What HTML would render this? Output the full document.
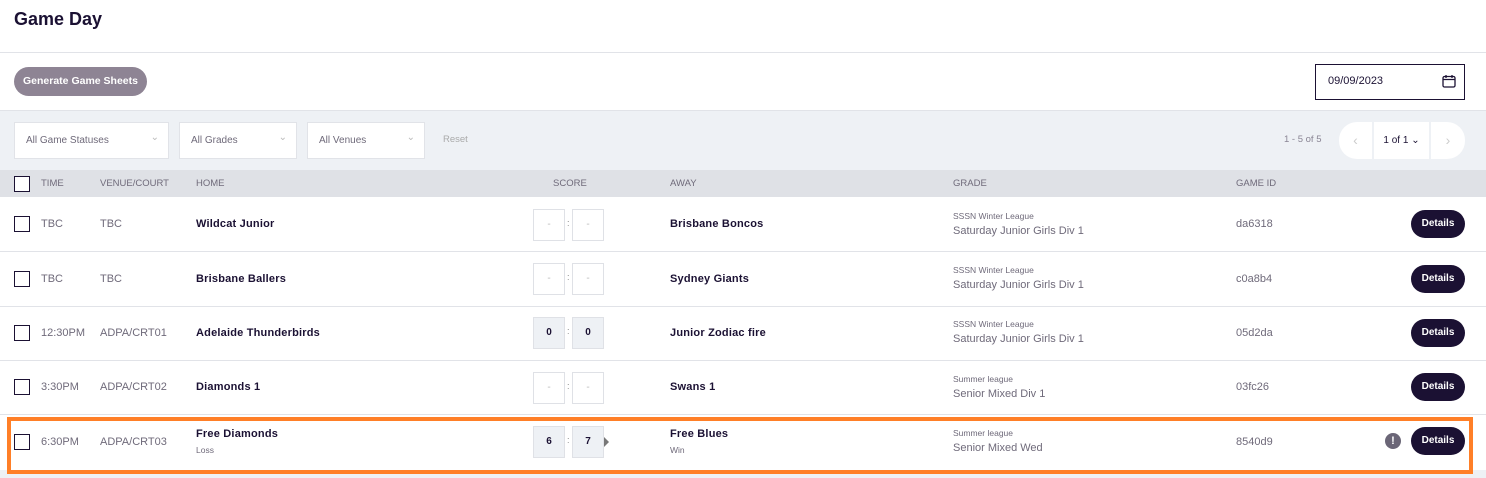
<!DOCTYPE html>
<html><head><style>
*{box-sizing:border-box;margin:0;padding:0}
body{width:1486px;height:478px;overflow:hidden;background:#fff;font-family:"Liberation Sans",sans-serif;color:#1b1133;position:relative}
.a{position:absolute}
.title{left:14px;top:9px;font-size:18px;font-weight:bold;color:#1b1133}
.hr{left:0;width:1486px;height:1px;background:#e1e3e8}
.gen{left:14px;top:67px;width:133px;height:29px;border-radius:15px;background:#8e8494;color:#fff;font-size:10.5px;font-weight:bold;line-height:29px;text-align:center}
.date{left:1315px;top:64px;width:150px;height:36px;border:1.5px solid #1b1133;font-size:11px;line-height:33px;padding-left:12px}
.filt{top:111px;left:0;width:1486px;height:59px;background:#eef1f5}
.sel{top:122px;height:37px;background:#fff;border:1px solid #e1e3e8;font-size:10px;color:#6f6a7a;line-height:35px;padding-left:11px}
.sel:after{content:"⌄";position:absolute;right:9px;top:-3px;color:#bbb;font-size:10px}
.th{top:170px;left:0;width:1486px;height:27px;background:#dfe1e6}
.hd{font-size:9.5px;color:#6f6a7a;top:178px}
.cb{width:16px;height:16px;border:1.5px solid #1b1133;background:#fff}
.t{font-size:11px;color:#6f6a7a}
.b{font-size:11px;font-weight:bold;color:#1b1133;letter-spacing:.2px}
.sm{font-size:8.5px;color:#6f6a7a}
.g{font-size:11px;color:#6f6a7a}
.sc{width:32px;height:32px;border:1px solid #dfe1e6;font-size:10px;text-align:center;line-height:30px;color:#bbb}
.sc.f{background:#eef1f5;color:#1b1133;font-weight:bold}
.det{left:1411px;width:54px;height:28px;border-radius:14px;background:#1b1133;color:#fff;font-size:10px;font-weight:bold;line-height:28px;text-align:center}
</style></head><body>
<div class="a title">Game Day</div>
<div class="a hr" style="top:52px"></div>
<div class="a gen">Generate Game Sheets</div>
<div class="a date">09/09/2023
<svg class="a" style="right:8px;top:9px" width="14" height="14" viewBox="0 0 14 14" fill="none" stroke="#1b1133" stroke-width="1.3"><rect x="1" y="2.5" width="12" height="10.5" rx="1.5"/><path d="M1 5.5h12M4 1v3M10 1v3"/></svg></div>
<div class="a hr" style="top:110px"></div>
<div class="a filt"></div>
<div class="a sel" style="left:14px;width:155px">All Game Statuses</div>
<div class="a sel" style="left:179px;width:118px">All Grades</div>
<div class="a sel" style="left:307px;width:118px">All Venues</div>
<div class="a" style="left:443px;top:134px;font-size:9.5px;color:#aaa">Reset</div>
<div class="a" style="left:1284px;top:134px;font-size:9.5px;color:#8a8594">1 - 5 of 5</div>
<div class="a" style="left:1339px;top:122px;width:33px;height:37px;background:#fff;border-radius:18px 0 0 18px;color:#ccc;text-align:center;line-height:37px;font-size:14px">‹</div>
<div class="a" style="left:1374px;top:122px;width:55px;height:37px;background:#fff;font-size:10px;text-align:center;line-height:37px;color:#1b1133">1 of 1 ⌄</div>
<div class="a" style="left:1431px;top:122px;width:34px;height:37px;background:#fff;border-radius:0 18px 18px 0;color:#ccc;text-align:center;line-height:37px;font-size:14px">›</div>
<div class="a th"></div>
<div class="a cb" style="left:14px;top:176px"></div>
<div class="a hd" style="left:41px">TIME</div>
<div class="a hd" style="left:100px">VENUE/COURT</div>
<div class="a hd" style="left:196px">HOME</div>
<div class="a hd" style="left:553px">SCORE</div>
<div class="a hd" style="left:670px">AWAY</div>
<div class="a hd" style="left:953px">GRADE</div>
<div class="a hd" style="left:1236px">GAME ID</div>

<!-- rows: tops 197,252,306,360,414 -->
<div class="a hr" style="top:251px"></div>
<div class="a hr" style="top:306px"></div>
<div class="a hr" style="top:360px"></div>
<div class="a hr" style="top:414px"></div>
<div class="a" style="left:0;top:470px;width:1486px;height:8px;background:#eef1f5"></div>

<div class="a cb" style="left:14px;top:216px"></div><div class="a t" style="left:41px;top:218px">TBC</div><div class="a t" style="left:100px;top:218px">TBC</div><div class="a b" style="left:196px;top:218px">Wildcat Junior</div>
<div class="a sc" style="left:533px;top:209px">-</div><div class="a" style="left:567px;top:218px;font-size:9px;color:#888">:</div><div class="a sc" style="left:572px;top:209px">-</div>
<div class="a b" style="left:670px;top:218px">Brisbane Boncos</div><div class="a sm" style="left:953px;top:211px">SSSN Winter League</div><div class="a g" style="left:953px;top:225px">Saturday Junior Girls Div 1</div><div class="a g" style="left:1236px;top:218px">da6318</div><div class="a det" style="top:210px">Details</div>

<div class="a cb" style="left:14px;top:271px"></div><div class="a t" style="left:41px;top:273px">TBC</div><div class="a t" style="left:100px;top:273px">TBC</div><div class="a b" style="left:196px;top:273px">Brisbane Ballers</div>
<div class="a sc" style="left:533px;top:263px">-</div><div class="a" style="left:567px;top:272px;font-size:9px;color:#888">:</div><div class="a sc" style="left:572px;top:263px">-</div>
<div class="a b" style="left:670px;top:273px">Sydney Giants</div><div class="a sm" style="left:953px;top:265px">SSSN Winter League</div><div class="a g" style="left:953px;top:279px">Saturday Junior Girls Div 1</div><div class="a g" style="left:1236px;top:273px">c0a8b4</div><div class="a det" style="top:265px">Details</div>

<div class="a cb" style="left:14px;top:325px"></div><div class="a t" style="left:41px;top:327px">12:30PM</div><div class="a t" style="left:100px;top:327px">ADPA/CRT01</div><div class="a b" style="left:196px;top:327px">Adelaide Thunderbirds</div>
<div class="a sc f" style="left:533px;top:317px">0</div><div class="a" style="left:567px;top:326px;font-size:9px;color:#888">:</div><div class="a sc f" style="left:572px;top:317px">0</div>
<div class="a b" style="left:670px;top:327px">Junior Zodiac fire</div><div class="a sm" style="left:953px;top:319px">SSSN Winter League</div><div class="a g" style="left:953px;top:333px">Saturday Junior Girls Div 1</div><div class="a g" style="left:1236px;top:327px">05d2da</div><div class="a det" style="top:319px">Details</div>

<div class="a cb" style="left:14px;top:379px"></div><div class="a t" style="left:41px;top:381px">3:30PM</div><div class="a t" style="left:100px;top:381px">ADPA/CRT02</div><div class="a b" style="left:196px;top:381px">Diamonds 1</div>
<div class="a sc" style="left:533px;top:372px">-</div><div class="a" style="left:567px;top:381px;font-size:9px;color:#888">:</div><div class="a sc" style="left:572px;top:372px">-</div>
<div class="a b" style="left:670px;top:381px">Swans 1</div><div class="a sm" style="left:953px;top:374px">Summer league</div><div class="a g" style="left:953px;top:388px">Senior Mixed Div 1</div><div class="a g" style="left:1236px;top:381px">03fc26</div><div class="a det" style="top:373px">Details</div>

<div class="a cb" style="left:14px;top:434px"></div><div class="a t" style="left:41px;top:436px">6:30PM</div><div class="a t" style="left:100px;top:436px">ADPA/CRT03</div><div class="a b" style="left:196px;top:428px">Free Diamonds</div><div class="a sm" style="left:196px;top:445px">Loss</div>
<div class="a sc f" style="left:533px;top:426px">6</div><div class="a" style="left:567px;top:435px;font-size:9px;color:#888">:</div><div class="a sc f" style="left:572px;top:426px">7</div>
<div class="a" style="left:604px;top:437px;width:0;height:0;border-top:5px solid transparent;border-bottom:5px solid transparent;border-left:5px solid #777"></div>
<div class="a b" style="left:670px;top:428px">Free Blues</div><div class="a sm" style="left:670px;top:445px">Win</div><div class="a sm" style="left:953px;top:428px">Summer league</div><div class="a g" style="left:953px;top:442px">Senior Mixed Wed</div><div class="a g" style="left:1236px;top:436px">8540d9</div>
<div class="a" style="left:1385px;top:433px;width:16px;height:16px;border-radius:50%;background:#6b6677;color:#fff;font-size:11px;font-weight:bold;text-align:center;line-height:16px">!</div>
<div class="a det" style="top:427px">Details</div>
<div class="a" style="left:7px;top:417px;width:1466px;height:57px;border:4px solid #ff7f27"></div>
</body></html>
